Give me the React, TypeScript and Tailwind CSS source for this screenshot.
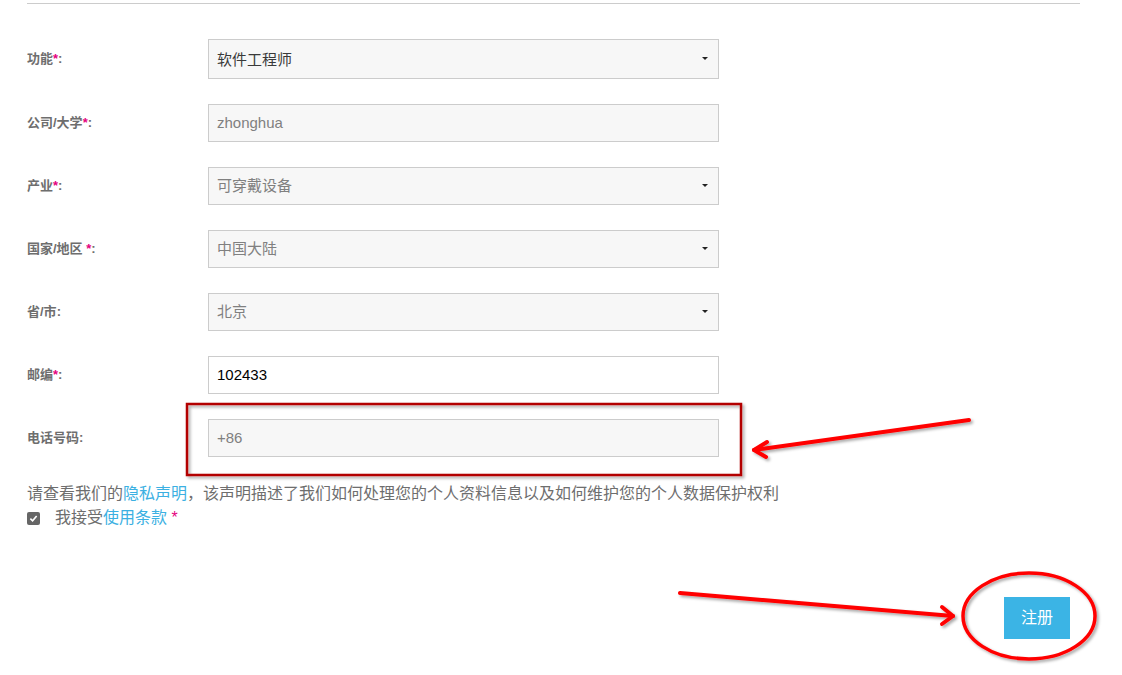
import React from 'react';

type Row = {
  label: string;
  req?: boolean;
  space?: boolean;
  kind: 'select' | 'input';
  value: string;
  muted?: boolean;
  white?: boolean;
  tall?: boolean;
};

const ROWS: Row[] = [
  { label: '功能', req: true, kind: 'select', value: '软件工程师', tall: true },
  { label: '公司/大学', req: true, kind: 'input', value: 'zhonghua', muted: true },
  { label: '产业', req: true, kind: 'select', value: '可穿戴设备', muted: true },
  { label: '国家/地区', req: true, space: true, kind: 'select', value: '中国大陆', muted: true },
  { label: '省/市', kind: 'select', value: '北京', muted: true },
  { label: '邮编', req: true, kind: 'input', value: '102433', white: true },
  { label: '电话号码', kind: 'input', value: '+86', muted: true },
];

const FONT = "font-['Liberation_Sans','Noto_Sans_CJK_SC',sans-serif]";

function Field({ row }: { row: Row }) {
  return (
    <div
      className={`relative flex w-[511px] items-center border border-[#cccccc] px-[8px] pt-[2px] text-[15px] ${
        row.tall ? 'h-[40px]' : 'h-[38px]'
      } ${row.white ? 'bg-white text-black' : 'bg-[#f7f7f7]'} ${
        row.muted ? 'text-[#808080]' : row.white ? '' : 'text-[#3a3a3a]'
      }`}
    >
      <span>{row.value}</span>
      {row.kind === 'select' && (
        <span className="absolute right-[10px] top-1/2 -mt-[2px] h-0 w-0 border-x-[3px] border-t-[3px] border-x-transparent border-t-[#222222]" />
      )}
    </div>
  );
}

function Annotations() {
  return (
    <svg
      className="pointer-events-none absolute left-0 top-0"
      width={1122}
      height={675}
      viewBox="0 0 1122 675"
    >
      <defs>
        <filter id="sh" x="-20%" y="-20%" width="140%" height="140%">
          <feDropShadow dx="2" dy="2" stdDeviation="1.5" floodColor="#000" floodOpacity="0.35" />
        </filter>
      </defs>
      <rect x={187} y={404} width={554} height={71} fill="none" stroke="#b30000" strokeWidth={2.5} filter="url(#sh)" />
      <g filter="url(#sh)" stroke="#ff0000" strokeWidth={4} strokeLinecap="round" strokeLinejoin="round" fill="none">
        <path d="M969 420 L754 450" />
        <path d="M767 442 L754 450 L766 457" />
        <path d="M680 593 L953 616" />
        <path d="M942 607 L953 616 L942 624" />
        <ellipse cx={1029} cy={616} rx={66} ry={43} strokeWidth={3.5} />
      </g>
    </svg>
  );
}

export default function App() {
  return (
    <div className={`relative h-[675px] w-[1122px] overflow-hidden bg-white ${FONT}`}>
      <div className="ml-[27px] w-[1053px] pt-[3px]">
        <div className="border-t border-[#cccccc]" />
        <div className="pt-[23px]">
          {ROWS.map(row => (
            <div key={row.label} className={`flex items-center ${row.tall ? 'h-[64px]' : 'h-[63px]'}`}>
              <div className="w-[181px] text-[13px] font-bold text-[#6e6e6e]">
                {row.label}
                {row.space && ' '}
                {row.req && <span className="text-[#e5007e]">*</span>}:
              </div>
              <Field row={row} />
            </div>
          ))}
        </div>
        <p className="mt-[13px] text-[16px] leading-[24px] text-[#6e6e6e]">
          请查看我们的<span className="text-[#3bb0e2]">隐私声明</span>，该声明描述了我们如何处理您的个人资料信息以及如何维护您的个人数据保护权利
        </p>
        <div className="flex h-[24px] items-center text-[16px] text-[#6e6e6e]">
          <span className="flex h-[13px] w-[13px] items-center justify-center rounded-[2px] bg-[#666666]">
            <svg width="9" height="9" viewBox="0 0 10 10">
              <path d="M1.5 5.2 L4 7.6 L8.5 2.2" stroke="#fff" strokeWidth="1.8" fill="none" />
            </svg>
          </span>
          <span className="ml-[15px]">
            我接受<span className="text-[#3bb0e2]">使用条款</span>
            <span className="text-[#e5007e]"> *</span>
          </span>
        </div>
        <div className="mt-[67px] flex justify-end pr-[10px]">
          <button className="h-[42px] w-[66px] bg-[#3bb4e5] text-[16px] text-white">注册</button>
        </div>
      </div>
      <Annotations />
    </div>
  );
}
